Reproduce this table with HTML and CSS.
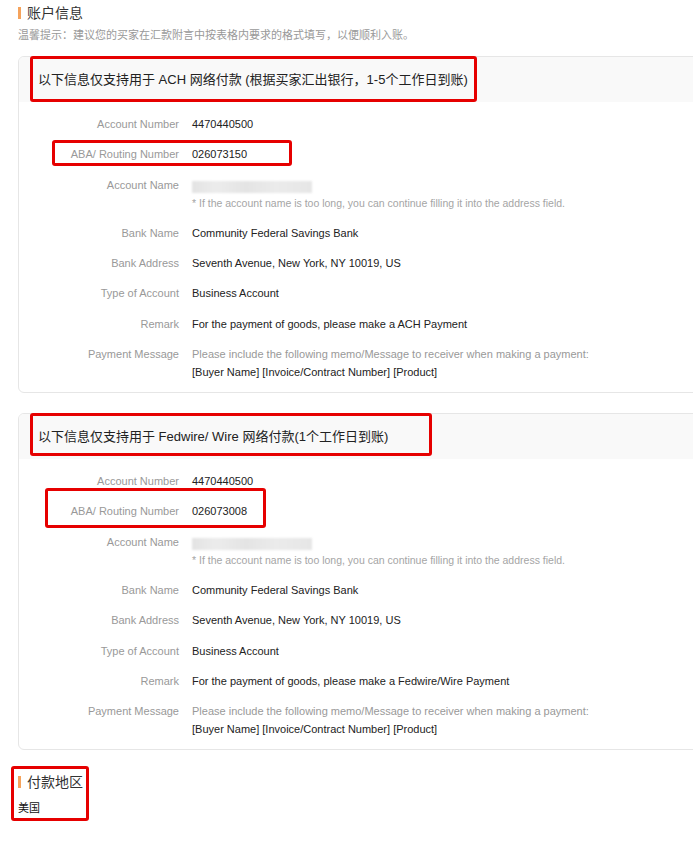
FILE: index.html
```html
<!DOCTYPE html>
<html lang="zh">
<head>
<meta charset="utf-8">
<title>账户信息</title>
<link rel="stylesheet" href="styles.css">
</head>
<body>
<div class="page">
  <h2 class="sec-title">账户信息</h2>
  <p class="hint">温馨提示：建议您的买家在汇款附言中按表格内要求的格式填写，以便顺利入账。</p>

  <div class="card">
    <div class="card-head">以下信息仅支持用于 ACH 网络付款 (根据买家汇出银行，1-5个工作日到账)</div>
    <div class="card-body">
      <div class="row"><div class="lbl">Account Number</div><div class="val">4470440500</div></div>
      <div class="row"><div class="lbl">ABA/ Routing Number</div><div class="val">026073150</div></div>
      <div class="row"><div class="lbl">Account Name</div><div class="val"><div class="blur"></div><div class="note">* If the account name is too long, you can continue filling it into the address field.</div></div></div>
      <div class="row"><div class="lbl">Bank Name</div><div class="val">Community Federal Savings Bank</div></div>
      <div class="row"><div class="lbl">Bank Address</div><div class="val">Seventh Avenue, New York, NY 10019, US</div></div>
      <div class="row"><div class="lbl">Type of Account</div><div class="val">Business Account</div></div>
      <div class="row"><div class="lbl">Remark</div><div class="val">For the payment of goods, please make a ACH Payment</div></div>
      <div class="row"><div class="lbl">Payment Message</div><div class="val"><div class="muted">Please include the following memo/Message to receiver when making a payment:</div><div>[Buyer Name] [Invoice/Contract Number] [Product]</div></div></div>
    </div>
  </div>

  <div class="card">
    <div class="card-head">以下信息仅支持用于 Fedwire/ Wire 网络付款(1个工作日到账)</div>
    <div class="card-body">
      <div class="row"><div class="lbl">Account Number</div><div class="val">4470440500</div></div>
      <div class="row"><div class="lbl">ABA/ Routing Number</div><div class="val">026073008</div></div>
      <div class="row"><div class="lbl">Account Name</div><div class="val"><div class="blur"></div><div class="note">* If the account name is too long, you can continue filling it into the address field.</div></div></div>
      <div class="row"><div class="lbl">Bank Name</div><div class="val">Community Federal Savings Bank</div></div>
      <div class="row"><div class="lbl">Bank Address</div><div class="val">Seventh Avenue, New York, NY 10019, US</div></div>
      <div class="row"><div class="lbl">Type of Account</div><div class="val">Business Account</div></div>
      <div class="row"><div class="lbl">Remark</div><div class="val">For the payment of goods, please make a Fedwire/Wire Payment</div></div>
      <div class="row"><div class="lbl">Payment Message</div><div class="val"><div class="muted">Please include the following memo/Message to receiver when making a payment:</div><div>[Buyer Name] [Invoice/Contract Number] [Product]</div></div></div>
    </div>
  </div>

  <h2 class="sec-title sec-region">付款地区</h2>
  <p class="region">美国</p>

  <div class="mark mark-1"></div>
  <div class="mark mark-2"></div>
  <div class="mark mark-3"></div>
  <div class="mark mark-4"></div>
  <div class="mark mark-5"></div>
</div>
</body>
</html>
```
FILE: styles.css
```css
html {
  overflow: hidden;
}
body {
  margin: 0;
  padding: 0;
  background: #fff;
}
.page {
  position: relative;
  padding: 4px 0 30px 18px;
  width: 760px;
  font-family: "Liberation Sans", "Noto Sans CJK SC", sans-serif;
  color: #222;
}
.sec-title {
  margin: 0;
  font-size: 14px;
  font-weight: normal;
  line-height: 18px;
  color: #333;
  display: flex;
  align-items: center;
  gap: 6px;
}
.sec-title::before {
  content: "";
  width: 3px;
  height: 12px;
  background: #f5a35c;
}
.hint {
  margin: 4px 0 0;
  font-size: 11px;
  line-height: 18px;
  color: #999;
}
.card {
  margin-top: 12px;
  width: 720px;
  border: 1px solid #e6e6e6;
  border-radius: 6px;
  overflow: hidden;
}
.card + .card {
  margin-top: 20px;
}
.card-head {
  background: #f9f9f9;
  height: 45px;
  line-height: 46px;
  padding-left: 19px;
  font-size: 13px;
  color: #222;
}
.card-body {
  padding: 13px 0 11px;
  font-size: 11px;
  line-height: 18px;
}
.row {
  display: flex;
  gap: 13px;
  margin-bottom: 12.3px;
}
.row:last-child {
  margin-bottom: 0;
}
.lbl {
  width: 160px;
  text-align: right;
  color: #999;
  flex: none;
}
.val {
  color: #222;
}
.muted, .note {
  color: #999;
}
.note {
  font-size: 10.5px;
  color: #a5a5a5;
}
.blur {
  margin-top: 5px;
  margin-bottom: 1px;
  width: 120px;
  height: 12px;
  background: linear-gradient(90deg, #e3e3e3 0%, #ececec 20%, #e4e4e4 45%, #ebebeb 70%, #e6e6e6 100%);
  filter: blur(0.8px);
}
.sec-region {
  margin-top: 23px;
}
.region {
  margin: 8px 0 0;
  font-size: 11px;
  line-height: 18px;
  color: #111;
}
.mark {
  position: absolute;
  border: 3px solid #e60000;
  border-radius: 3px;
  box-sizing: border-box;
}
.mark-1 { left: 30px; top: 56px; width: 447px; height: 46px; }
.mark-2 { left: 52px; top: 140px; width: 240px; height: 26px; }
.mark-3 { left: 30px; top: 413px; width: 402px; height: 43px; }
.mark-4 { left: 45px; top: 488px; width: 221px; height: 40px; }
.mark-5 { left: 11px; top: 766px; width: 78px; height: 55px; }
```
